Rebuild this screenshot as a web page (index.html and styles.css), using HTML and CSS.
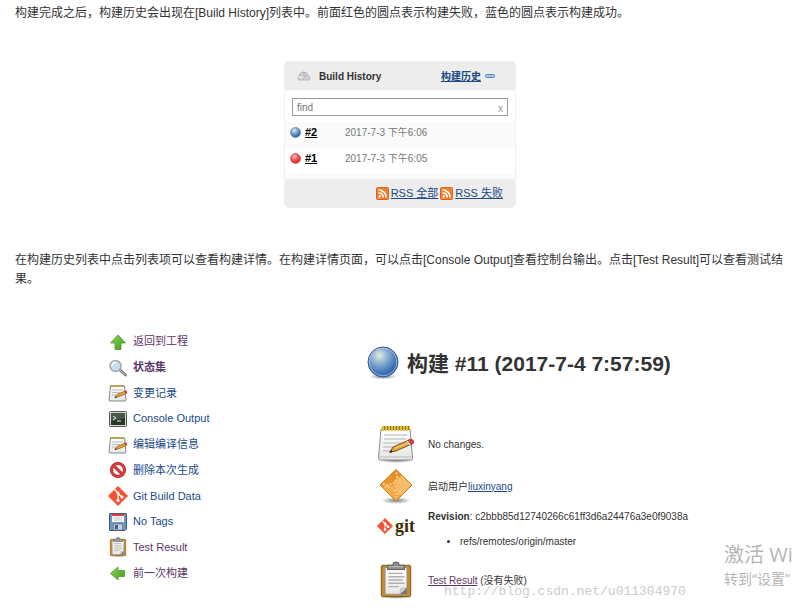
FILE: index.html
```
<!DOCTYPE html>
<html lang="zh-CN">
<head>
    <meta charset="UTF-8">
    <meta name="viewport" content="width=device-width, initial-scale=1.0">
    <title>Jenkins 构建历史</title>
    <link rel="stylesheet" href="styles.css">
</head>
<body>
    <!-- shared gradients and icons -->
    <svg class="sprite" aria-hidden="true">
        <defs>
            <radialGradient id="blue" cx="0.38" cy="0.28" r="0.75">
                <stop offset="0" stop-color="#e4ecdc"/>
                <stop offset="0.35" stop-color="#8fb2d6"/>
                <stop offset="0.8" stop-color="#3a6fb4"/>
                <stop offset="1" stop-color="#2f62a8"/>
            </radialGradient>
            <radialGradient id="red" cx="0.4" cy="0.3" r="0.75">
                <stop offset="0" stop-color="#ffc4c4"/>
                <stop offset="0.45" stop-color="#f45a5a"/>
                <stop offset="1" stop-color="#d81f26"/>
            </radialGradient>
            <radialGradient id="shadow">
                <stop offset="0" stop-color="#000" stop-opacity="0.5"/>
                <stop offset="1" stop-color="#000" stop-opacity="0"/>
            </radialGradient>
            <linearGradient id="green" x2="1" y2="1">
                <stop offset="0" stop-color="#8fd95a"/>
                <stop offset="1" stop-color="#3f9a1a"/>
            </linearGradient>
            <linearGradient id="orange" x2="0" y2="1">
                <stop offset="0" stop-color="#e08a1c"/>
                <stop offset="1" stop-color="#f6ab45"/>
            </linearGradient>
            <linearGradient id="paper" x2="0" y2="1">
                <stop offset="0" stop-color="#fff"/>
                <stop offset="1" stop-color="#e6e6e3"/>
            </linearGradient>
            <clipPath id="diamond">
                <path d="M19 3l15 15-15 15L4 18z"/>
            </clipPath>
        </defs>
        <symbol id="icon-notepad" viewBox="0 0 38 38">
            <ellipse cx="19" cy="35.500" rx="18" ry="2.500" fill="url(#shadow)"/>
            <path d="M4 4h29l2.500 29q0 2-2 2h-30q-2 0-2-2z" fill="url(#paper)" stroke="#8c8c88"/>
            <path d="M2 32h33" stroke="#bbb"/>
            <path d="M7 10h23M7 14h22M6.500 18h18M6 22h12M6 26h9" stroke="#b5b5b5"/>
            <path d="M5 3h28" stroke="#8a7424" stroke-width="4"/>
            <path d="M5 3.500h28" stroke="#e0bd3c" stroke-width="5" stroke-dasharray="2 1"/>
            <path d="M13 27l3-5 16-7 3 4-16 7z" fill="#e0a444" stroke="#7c5418"/>
            <path d="M12 28l2-3 2 2z" fill="#222"/>
            <path d="M18 23.500l15-6.500" stroke="#f5cf84"/>
            <path d="M30 16l3-2q4 0 4 4l-4 2z" fill="#e03c3c" stroke="#a32020" stroke-width="0.5"/>
            <path d="M30 16l3 4" stroke="#ddd" stroke-width="1.500"/>
        </symbol>
        <symbol id="icon-edit" viewBox="0 0 20 20">
            <path d="M2.500 3h14l1.500 14q0 1-1 1H2q-1 0-1-1z" fill="url(#paper)" stroke="#888"/>
            <path d="M2.500 3h14" stroke="#b39a3d" stroke-width="2" stroke-dasharray="1.500 0.500"/>
            <path d="M4 7h11M4 9.500h8M4 12h4" stroke="#bbb"/>
            <path d="M7 14.500l2-3 8-3.500 1.500 2.500-8.500 3.500z" fill="#e5a23a" stroke="#875818" stroke-width="0.700"/>
            <path d="M16 8l1.500-.8q2 .3 1.500 2.500l-1.300.8z" fill="#dd3b32"/>
            <path d="M6.500 15l1.200-2 1 1.300z" fill="#222"/>
        </symbol>
        <symbol id="icon-clipboard" viewBox="0 0 34 40">
            <ellipse cx="17" cy="37.500" rx="17" ry="2.500" fill="url(#shadow)"/>
            <rect x="1.500" y="4.500" width="31" height="33" rx="1.500" fill="#c28a2c" stroke="#805410"/>
            <path d="M5.500 7h23v28h-23z" fill="url(#paper)" stroke="#999"/>
            <path d="M9 13h15M9 16.500h17M9 20h15M9 23.500h17M9 27h11" stroke="#b0b0b0" stroke-width="1.500"/>
            <path d="M28.500 28v7H21z" fill="#777"/>
            <path d="M21 35l1-6 6.500-1z" fill="#d5d5d5" stroke="#999" stroke-width="0.500"/>
            <path d="M9 4.500h5V2q3-2 6 0v2.500h5q1 0 1 1V9H8V5.500q0-1 1-1z" fill="#8c908a" stroke="#555753"/>
            <path d="M9.500 6h15" stroke="#c4c6c2"/>
        </symbol>
        <symbol id="icon-git" viewBox="0 0 20 20">
            <path d="M10 .5l9.500 9.500-9.500 9.500L.5 10z" fill="#f05133" stroke="#f05133" stroke-linejoin="round"/>
            <path d="M6.500 3.500l3.500 3.500v7.500M10 7.500l4 3.500" fill="none" stroke="#fff" stroke-width="1.300"/>
            <circle cx="10" cy="7" r="1.600" fill="#fff"/>
            <circle cx="10" cy="14.500" r="1.600" fill="#fff"/>
            <circle cx="14" cy="11" r="1.600" fill="#fff"/>
        </symbol>
        <symbol id="icon-rss" viewBox="0 0 13 13">
            <rect x="0.500" y="0.500" width="12" height="12" rx="1" fill="#ee8130" stroke="#d9661c"/>
            <circle cx="3.700" cy="9.500" r="1.200" fill="#fff"/>
            <path d="M2.500 5.700a4.800 4.800 0 0 1 4.800 4.800M2.500 2.900a7.700 7.700 0 0 1 7.700 7.600" fill="none" stroke="#fff" stroke-width="1.500"/>
        </symbol>
    </svg>

    <main class="page">
        <p>构建完成之后，构建历史会出现在[Build History]列表中。前面红色的圆点表示构建失败，蓝色的圆点表示构建成功。</p>

        <section class="history">
            <header class="history-header">
                <svg class="weather" viewBox="0 0 14 10">
                    <path d="M1.500 9q-1.500-2 .5-3.500Q2.500 1 7 1q4 .5 4.500 4 2.500 1.500 1 4z" fill="#d2d2d2" stroke="#b5b5b5"/>
                    <path d="M7 1.500v3M3 3.500l2 2M6 8l4-4" stroke="#999" stroke-width="0.800"/>
                    <path d="M2 6.500q2-1.500 4 0" fill="none" stroke="#fff"/>
                </svg>
                <h2>Build History</h2>
                <a href="#trend">构建历史</a>
                <svg class="collapse" viewBox="0 0 10 4">
                    <rect x="0.500" y="0.500" width="9" height="3" rx="1" fill="#a9c5e8" stroke="#5b88c0"/>
                </svg>
            </header>
            <div class="search">
                <input type="text" placeholder="find" aria-label="find">
                <button type="button" aria-label="clear">x</button>
            </div>
            <ul class="builds">
                <li>
                    <svg class="ball" viewBox="0 0 11 11"><circle cx="5.500" cy="5.500" r="5" fill="url(#blue)" stroke="#5577a5" stroke-width="0.600"/></svg>
                    <a href="#2">#2</a>
                    <time>2017-7-3 下午6:06</time>
                </li>
                <li>
                    <svg class="ball" viewBox="0 0 11 11"><circle cx="5.500" cy="5.500" r="5" fill="url(#red)" stroke="#c34444" stroke-width="0.600"/></svg>
                    <a href="#1">#1</a>
                    <time>2017-7-3 下午6:05</time>
                </li>
            </ul>
            <footer class="history-footer">
                <svg class="rss"><use href="#icon-rss"/></svg>
                <a href="#rss-all">RSS 全部</a>
                <svg class="rss"><use href="#icon-rss"/></svg>
                <a href="#rss-failed">RSS 失败</a>
            </footer>
        </section>

        <p>在构建历史列表中点击列表项可以查看构建详情。在构建详情页面，可以点击[Console Output]查看控制台输出。点击[Test Result]可以查看测试结果。</p>

        <section class="build">
            <nav class="tasks">
                <a class="visited" href="#project">
                    <svg viewBox="0 0 20 20"><path d="M10 3l7.500 8H13v6.500H7V11H2.500z" fill="url(#green)" stroke="#4c9a2a" stroke-width="0.800"/></svg>
                    返回到工程
                </a>
                <a class="visited current" href="#status">
                    <svg viewBox="0 0 20 20">
                        <path d="M12 12l5.500 5" stroke="#777" stroke-width="3" stroke-linecap="round"/>
                        <path d="M12.500 12.500l5 4.500" stroke="#c9c9c9" stroke-linecap="round"/>
                        <circle cx="7.500" cy="8" r="5.500" fill="#c9def2" stroke="#a5a9ab" stroke-width="1.500"/>
                        <path d="M4 8q0-3.500 4-3.500" fill="none" stroke="#fff" stroke-width="1.500"/>
                    </svg>
                    状态集
                </a>
                <a href="#changes"><svg><use href="#icon-edit"/></svg>变更记录</a>
                <a href="#console">
                    <svg viewBox="0 0 20 20">
                        <rect x="1.500" y="2.500" width="17" height="15" rx="1" fill="#d3d7cf" stroke="#555753"/>
                        <path d="M3 4h14v12H3z" fill="#28382b"/>
                        <path d="M3 4h14v5L3 12z" fill="#48594a"/>
                        <path d="M5 7l3 2-3 2M9 12h4" fill="none" stroke="#e4efe0"/>
                    </svg>
                    Console Output
                </a>
                <a href="#edit"><svg><use href="#icon-edit"/></svg>编辑编译信息</a>
                <a href="#delete">
                    <svg viewBox="0 0 20 20">
                        <circle cx="10" cy="10" r="6.500" fill="#f6f0f0" stroke="#a81c1c" stroke-width="3"/>
                        <path d="M5.500 5.500l9 9" stroke="#a81c1c" stroke-width="3"/>
                        <circle cx="10" cy="10" r="6.500" fill="none" stroke="#d84040" stroke-width="2"/>
                        <path d="M5.500 5.500l9 9" stroke="#d84040" stroke-width="2"/>
                    </svg>
                    删除本次生成
                </a>
                <a href="#git"><svg><use href="#icon-git"/></svg>Git Build Data</a>
                <a href="#tags">
                    <svg viewBox="0 0 20 20">
                        <path d="M2 1.500h16q.5 0 .5.500v15l-1.500 1.500H2q-.5 0-.5-.5V2q0-.5.500-.5z" fill="#6f95c4" stroke="#37598a"/>
                        <path d="M4 2h12v8H4z" fill="#f5f5f5"/>
                        <path d="M4 2h12v2H4z" fill="#dc4040"/>
                        <path d="M6 6h8M6 8h8" stroke="#ccc"/>
                        <path d="M5.500 12h9v6h-9z" fill="#cfd2d4" stroke="#5e6f84" stroke-width="0.700"/>
                        <path d="M7 13h3v4H7z" fill="#3d5c88"/>
                    </svg>
                    No Tags
                </a>
                <a class="visited" href="#tests"><svg><use href="#icon-clipboard"/></svg>Test Result</a>
                <a class="visited" href="#previous">
                    <svg viewBox="0 0 20 20"><path d="M2.500 10.500L10 4v3.500h6.500v6H10V17z" fill="url(#green)" stroke="#4c9a2a" stroke-width="0.800"/></svg>
                    前一次构建
                </a>
            </nav>

            <div class="details">
                <h1>
                    <svg viewBox="0 0 32 34">
                        <ellipse cx="16" cy="30.500" rx="14" ry="3" fill="url(#shadow)"/>
                        <circle cx="16" cy="16" r="15" fill="url(#blue)" stroke="#2e5890"/>
                        <circle cx="16" cy="16" r="13.800" fill="none" stroke="#a8c2e0" stroke-width="0.800"/>
                    </svg>
                    构建 #11 (2017-7-4 7:57:59)
                </h1>
                <div class="row">
                    <svg class="row-icon"><use href="#icon-notepad"/></svg>
                    <div>No changes.</div>
                </div>
                <div class="row">
                    <svg class="row-icon" viewBox="0 0 38 38">
                        <ellipse cx="19" cy="33.500" rx="15" ry="3.500" fill="url(#shadow)"/>
                        <path d="M19 2.500L35 18 19 34 3 18z" fill="url(#orange)" stroke="#d37d18" stroke-linejoin="round"/>
                        <g clip-path="url(#diamond)">
                            <circle cx="28" cy="19" r="10" fill="#f8bd6a"/>
                            <circle cx="28" cy="19" r="10.500" fill="none" stroke="#f8bd6a" stroke-width="2.500" stroke-dasharray="2.500 2"/>
                            <circle cx="11" cy="9" r="9" fill="none" stroke="#fbd49a" stroke-width="1.500" stroke-dasharray="2 1.500"/>
                            <circle cx="10" cy="29" r="9" fill="#f4ab48"/>
                            <circle cx="10" cy="29" r="9.500" fill="none" stroke="#fbd49a" stroke-width="1.500" stroke-dasharray="2 1.500"/>
                        </g>
                    </svg>
                    <div>启动用户<a href="#user">liuxinyang</a></div>
                </div>
                <div class="row revision">
                    <div class="row-icon git-logo"><svg><use href="#icon-git"/></svg>git</div>
                    <div>
                        <b>Revision</b>: c2bbb85d12740266c61ff3d6a24476a3e0f9038a
                        <ul>
                            <li>refs/remotes/origin/master</li>
                        </ul>
                    </div>
                </div>
                <div class="row">
                    <svg class="row-icon"><use href="#icon-clipboard"/></svg>
                    <div><a class="visited" href="#tests">Test Result</a> (没有失败)</div>
                </div>
            </div>
        </section>

        <div class="watermark">http://blog.csdn.net/u011304970</div>
        <div class="activate">
            <div class="activate-title">激活 Wi</div>
            <div>转到“设置”</div>
        </div>
    </main>
</body>
</html>
```
FILE: styles.css
```
* {
    box-sizing: border-box;
}
body {
    margin: 0;
    font-family: "Liberation Sans", "Noto Sans CJK SC", sans-serif;
    font-size: 12px;
    line-height: 19px;
    color: #333;
    background-color: #fff;
}
p, h1, h2, ul {
    margin: 0;
    padding: 0;
}
a {
    color: #204a87;
}
a.visited {
    color: #5c3566;
}
svg {
    display: block;
    flex: none;
}
.sprite {
    position: absolute;
    width: 0;
    height: 0;
}
.page {
    position: relative;
    overflow: hidden;
    padding: 4px 9px 4px 15px;
}

/* build history panel */
.history {
    width: 232px;
    margin: 38px auto 43px;
    border: 1px solid #f0f0f0;
    border-radius: 4px;
    overflow: hidden;
    font-size: 10px;
}
.history-header {
    display: flex;
    align-items: center;
    height: 28px;
    padding: 0 20px 0 12px;
    background-color: #ededed;
}
.history-header h2 {
    flex: 1;
    margin-left: 8px;
    font-size: 10px;
}
.history-header a {
    font-weight: bold;
}
.weather {
    width: 14px;
    height: 10px;
}
.collapse {
    width: 10px;
    height: 4px;
    margin-left: 4px;
}
.search {
    display: flex;
    height: 18px;
    margin: 8px 7px 6px;
    border: 1px solid #999;
}
.search input {
    flex: 1;
    min-width: 0;
    padding: 0 4px;
    border: 0;
    outline: 0;
    font: inherit;
}
.search input::placeholder {
    color: #777;
}
.search button {
    padding: 0 4px;
    border: 0;
    background: none;
    font: inherit;
    color: #999;
}
.builds {
    list-style: none;
    padding-bottom: 5px;
    background-color: #fafafa;
}
.builds li {
    display: flex;
    align-items: center;
    height: 26px;
    padding: 0 5px 6px;
}
.builds li:nth-child(even) {
    background-color: #fff;
}
.builds a {
    width: 40px;
    margin-left: 4px;
    font-size: 11px;
    font-weight: bold;
    color: #000;
}
.builds time {
    color: #777;
}
.ball {
    width: 11px;
    height: 11px;
}
.history-footer {
    display: flex;
    align-items: center;
    justify-content: flex-end;
    gap: 2px;
    height: 28px;
    padding-right: 12px;
    background-color: #ededed;
    font-size: 11px;
}
.rss {
    width: 13px;
    height: 13px;
}

/* build page */
.build {
    display: grid;
    grid-template-columns: 259px 1fr;
    max-width: 584px;
    margin: 40px auto 0;
}
.tasks {
    display: grid;
    grid-auto-rows: 1fr;
    align-self: start;
    height: 257px;
    font-size: 11px;
}
.tasks a {
    display: flex;
    align-items: center;
    gap: 5px;
    text-decoration: none;
}
.tasks svg {
    width: 20px;
    height: 20px;
}
.tasks .current {
    font-weight: bold;
}
.details {
    padding-top: 17px;
    font-size: 10px;
    white-space: nowrap;
}
.details h1 {
    display: flex;
    align-items: center;
    gap: 8px;
    height: 34px;
    margin-bottom: 43px;
    font-size: 21px;
}
.details h1 svg {
    width: 32px;
    height: 34px;
}
.row {
    display: flex;
    align-items: center;
    gap: 13px;
    height: 42px;
    padding-left: 10px;
}
.row-icon {
    width: 38px;
    height: 38px;
}
.revision {
    align-items: flex-start;
    height: 52px;
}
.revision ul {
    margin-top: 6px;
    padding-left: 32px;
}
.git-logo {
    display: flex;
    align-items: center;
    gap: 2px;
    font-family: "Liberation Serif", serif;
    font-size: 18px;
    font-weight: bold;
    color: #3e2c00;
}
.git-logo svg {
    width: 16px;
    height: 16px;
}

/* overlays */
.watermark {
    position: absolute;
    left: 444px;
    bottom: 4px;
    font-family: "Liberation Mono", monospace;
    font-size: 13px;
    color: #ccc;
}
.activate {
    position: absolute;
    left: 724px;
    bottom: 14px;
    font-family: "Open Sans", "Noto Sans CJK SC", sans-serif;
    font-size: 14px;
    line-height: 24px;
    white-space: nowrap;
    color: #b5b5b5;
}
.activate-title {
    font-size: 20px;
}
```
